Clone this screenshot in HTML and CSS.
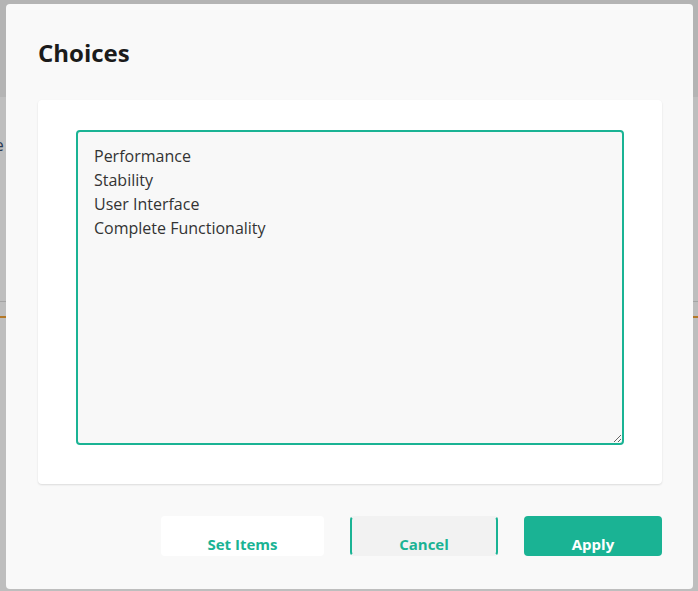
FILE: index.html
```html
<!DOCTYPE html>
<html>
<head>
<meta charset="utf-8">
<link rel="stylesheet" href="styles.css">
</head>
<body>
<div class="page">
  <div class="page-header"></div>
  <div class="page-body">
    <div class="page-label">Name</div>
    <div class="page-rule"></div>
    <div class="page-accent"></div>
  </div>
</div>
<div class="overlay"></div>
<div class="modal">
  <h1 class="modal-title">Choices</h1>
  <div class="card">
    <textarea class="choices-input" spellcheck="false">Performance
Stability
User Interface
Complete Functionality</textarea>
  </div>
  <div class="actions">
    <button class="btn btn-plain">Set Items</button>
    <button class="btn btn-outline">Cancel</button>
    <button class="btn btn-primary">Apply</button>
  </div>
</div>
</body>
</html>
```
FILE: styles.css
```css
html, body {
  margin: 0;
  padding: 0;
  height: 100%;
  overflow: hidden;
}
body {
  font-family: "Open Sans", "Noto Sans", sans-serif;
  background: #ffffff;
}
.page {
  height: 100%;
}
.page-header {
  height: 97px;
  background: #f2f2f2;
}
.page-body {
  display: flex;
  flex-direction: column;
}
.page-label {
  margin-top: 36px;
  margin-left: -41px;
  font-size: 16px;
  line-height: 24px;
  color: #3a5070;
  white-space: nowrap;
}
.page-rule {
  margin-top: 144px;
  height: 1px;
  background: #dcdcdc;
}
.page-accent {
  margin-top: 14px;
  height: 2px;
  background: #f0a236;
}
.overlay {
  position: fixed;
  inset: 0;
  background: rgba(0, 0, 0, 0.255);
}
.modal {
  position: fixed;
  left: 6px;
  top: 4px;
  width: 687px;
  height: 585px;
  box-sizing: border-box;
  background: #f9f9f9;
  border-radius: 4px;
  padding: 0 31px 0 32px;
  display: flex;
  flex-direction: column;
}
.modal-title {
  margin: 35px 0 0 0;
  font-size: 24px;
  line-height: 27px;
  font-weight: 700;
  color: #1b1b1b;
}
.card {
  margin-top: 34px;
  background: #ffffff;
  border-radius: 4px;
  box-shadow: 0 1px 2px rgba(0, 0, 0, 0.12);
  padding: 30px 38px 39px 38px;
}
.choices-input {
  display: block;
  width: 100%;
  height: 315px;
  box-sizing: border-box;
  margin: 0;
  border: 2px solid #1ab394;
  border-radius: 4px;
  background: #f8f8f8;
  padding: 12px 16px;
  font-family: "Open Sans", "Noto Sans", sans-serif;
  font-size: 16px;
  line-height: 24px;
  color: #333333;
  outline: none;
}
.actions {
  margin-top: 32px;
  display: flex;
  justify-content: flex-end;
  gap: 26px;
}
.btn {
  height: 40px;
  box-sizing: border-box;
  border-radius: 4px;
  padding: 18px 0 2px 0;
  font-family: "Open Sans", "Noto Sans", sans-serif;
  font-size: 15px;
  line-height: 20px;
  font-weight: 700;
  cursor: pointer;
}
.btn-plain {
  width: 163px;
  border: none;
  background: #ffffff;
  color: #1ab394;
}
.btn-outline {
  width: 148px;
  border: 2px solid #1ab394;
  border-top-color: transparent;
  border-bottom-color: transparent;
  padding-top: 16px;
  background: #f2f2f2;
  color: #1ab394;
}
.btn-primary {
  width: 138px;
  border: none;
  background: #1ab394;
  color: #ffffff;
}
```
